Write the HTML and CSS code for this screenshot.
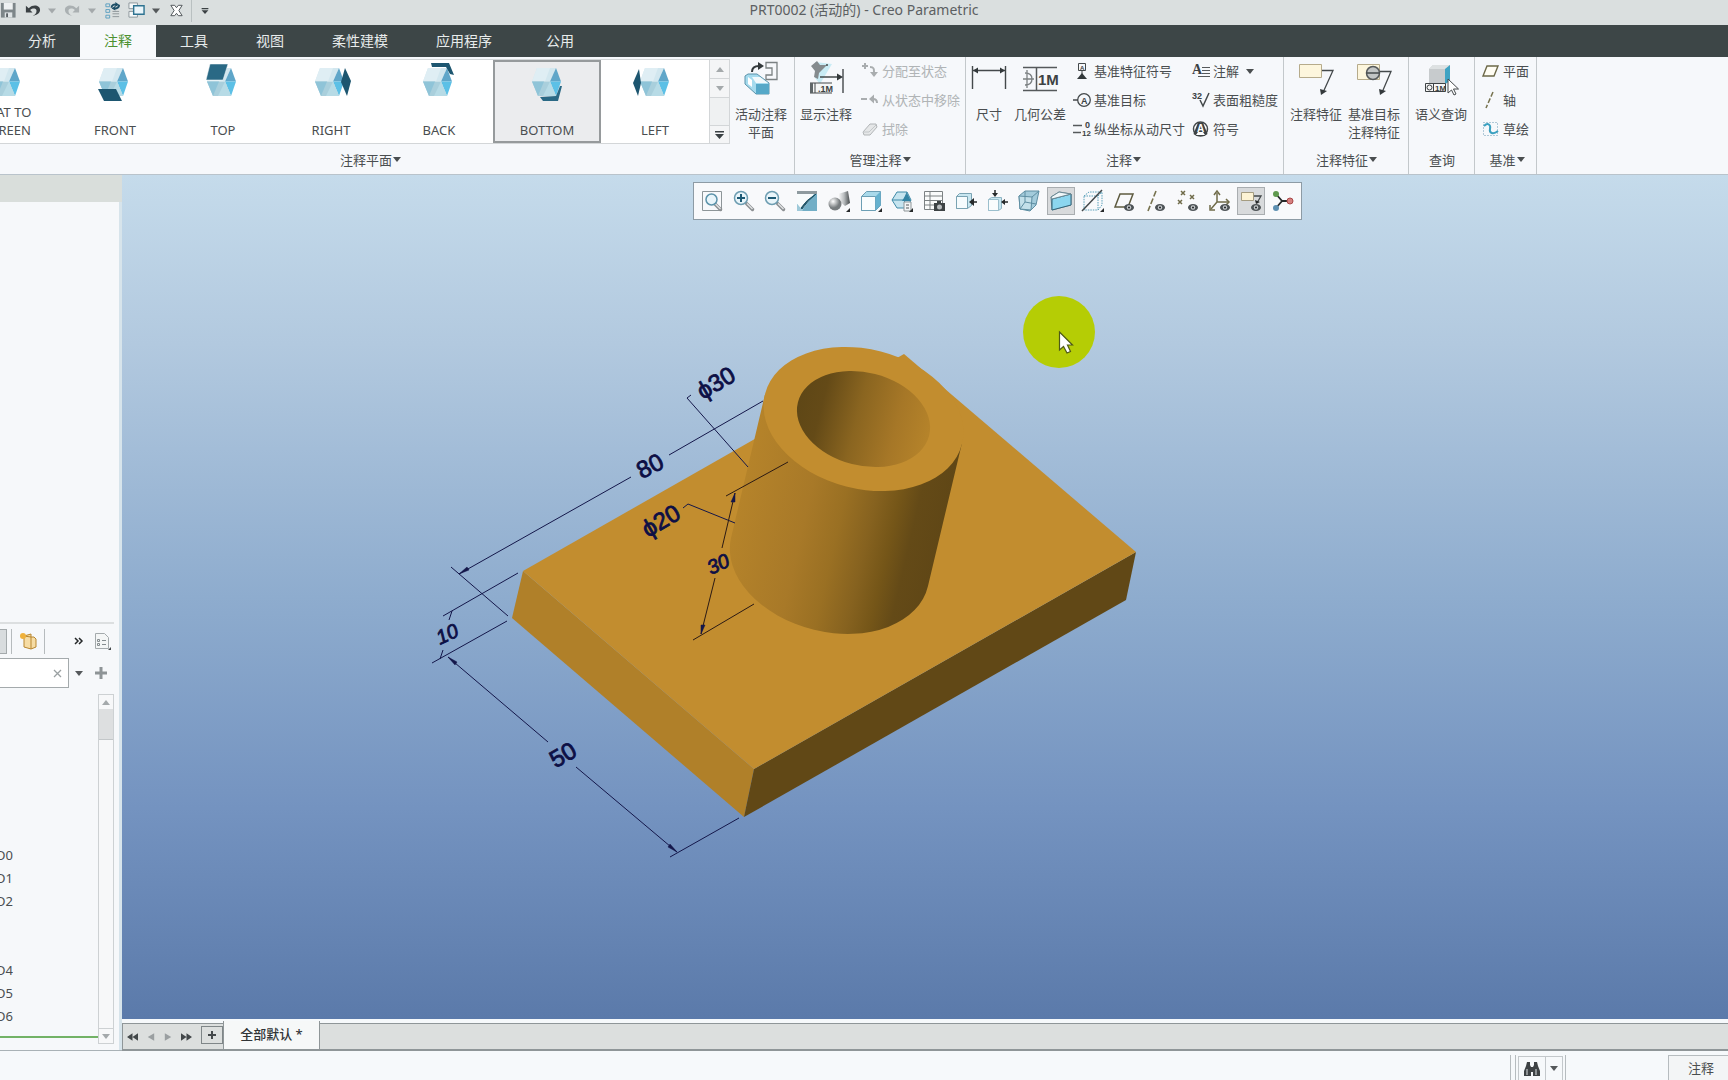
FILE: index.html
```html
<!DOCTYPE html>
<html lang="zh-CN">
<head>
<meta charset="utf-8">
<title>PRT0002 (活动的) - Creo Parametric</title>
<link rel="stylesheet" href="styles.css">
</head>
<body>
<svg class="defs" aria-hidden="true">
  <symbol id="caret" viewBox="0 0 8 5"><path d="M0 0h8L4 5z" fill="currentColor"/></symbol>
  <symbol id="cube" viewBox="0 0 30 28">
    <path d="M5 0h19l-6 13.500H0z" fill="#d2e7ef"/>
    <path d="M5 0h13l-5 13.500H0z" fill="#dfeef4"/>
    <path d="M24 0l5 13.500H18z" fill="#5fa6c9"/>
    <path d="M29 13.500L24 28l-6-14.500z" fill="#5cc0e6"/>
    <path d="M0 13.500h18L24 28H6z" fill="#a9cfdc"/>
    <path d="M0 13.500h12L6 28z" fill="#8fc4d8"/>
    <path d="M18 13.500L24 28H11z" fill="#b7dbe6"/>
  </symbol>
  <symbol id="eye" viewBox="0 0 10 7"><ellipse cx="5" cy="3.500" rx="5" ry="3.500" fill="#4d5356"/><circle cx="5" cy="3.500" r="2.200" fill="#c9cdd0"/><circle cx="5" cy="3.500" r="1.100" fill="#2c3032"/></symbol>
  <symbol id="lens" viewBox="0 0 22 22"><path d="M13.500 13.500l6 6" stroke="#8b8f92" stroke-width="3.400" stroke-linecap="round"/><path d="M14 13.500l5.500 5.500" stroke="#e4e6e7" stroke-width="1.200"/></symbol>
</svg>

<header class="titlebar">
  <nav class="quick" aria-label="快速访问">
    <button class="qbtn" aria-label="保存"><svg viewBox="0 0 18 18"><path d="M1 1h15.500v15.500H1z" fill="#7d8689"/><path d="M4 1h9.500v7H4z" fill="#eef1f2"/><path d="M5 11h8v5.500H5z" fill="#dfe4e6"/><path d="M6.500 12h2v4h-2z" fill="#596064"/></svg></button>
    <button class="qbtn" aria-label="撤消"><svg viewBox="0 0 18 18"><path d="M2 4v7h7L6.500 8.500C10 5.500 14.500 7 13 11c-.5 1.500-2 2.800-4 3.500 5-.3 8-2.800 8-6 0-5-7-6.500-12-2z" fill="#3b4144"/></svg></button>
    <button class="qdrop faint" aria-label="撤消列表"><svg><use href="#caret"/></svg></button>
    <button class="qbtn" aria-label="重做"><svg viewBox="0 0 18 18"><path d="M16 4v7H9l2.500-2.500C8 5.500 3.500 7 5 11c.5 1.500 2 2.800 4 3.500-5-.3-8-2.800-8-6C1 3.500 8 2 13 6.500z" fill="#aab0b2"/></svg></button>
    <button class="qdrop faint" aria-label="重做列表"><svg><use href="#caret"/></svg></button>
    <button class="qbtn" aria-label="重新生成"><svg viewBox="0 0 18 18" fill="none"><path d="M2 2h4v3H2zM2 8h4v3H2zM2 14h4v3H2z" stroke="#5b9fc0"/><path d="M9 10h7M9 12.500h7M9 15.500h7" stroke="#8d9598"/><path d="M8 6c0-3 3-4 5-3M16 3c0 3-2 4-5 4" stroke="#1d4e66" stroke-width="2"/><path d="M12 0l4 3-4 2zM12 4L8 7l4 2z" fill="#1d4e66"/></svg></button>
    <button class="qbtn" aria-label="窗口"><svg viewBox="0 0 18 18" fill="none"><path d="M1 1h9v6H1zM1 10h9v6H1z" fill="#f5f8f9" stroke="#8c979b"/><path d="M6 4h11v9H6z" fill="#eaf5fa" stroke="#2e7391" stroke-width="1.500"/></svg></button>
    <button class="qdrop" aria-label="窗口列表"><svg><use href="#caret"/></svg></button>
    <button class="qbtn" aria-label="关闭窗口"><svg viewBox="0 0 18 18"><path d="M3 3.500h4l2 2.500 2-2.500h4L11.500 9l3.500 5.500h-4L9 12l-2 2.500H3L6.500 9z" fill="#fff" stroke="#4b5255"/></svg></button>
    <span class="qsep"></span>
    <button class="qdrop" aria-label="自定义"><svg viewBox="0 0 9 8"><path d="M0 0h9v1.500H0zM0 3h9L4.500 8z" fill="#3b4144"/></svg></button>
  </nav>
  <h1 class="title">PRT0002 (活动的) - Creo Parametric</h1>
</header>

<nav class="tabs" aria-label="功能区">
  <button class="tab">分析</button>
  <button class="tab is-active">注释</button>
  <button class="tab">工具</button>
  <button class="tab">视图</button>
  <button class="tab">柔性建模</button>
  <button class="tab">应用程序</button>
  <button class="tab tab-last">公用</button>
</nav>

<section class="ribbon">
  <div class="group group-planes">
    <div class="group-body">
      <div class="gallery">
        <button class="cell"><svg viewBox="0 0 40 40"><use href="#cube" x="4" y="6" width="30" height="28"/></svg><span>FLAT TO<br>SCREEN</span></button>
        <button class="cell"><svg viewBox="0 0 40 40"><use href="#cube" x="4" y="6" width="30" height="28"/><path d="M3 27h18l6 12H9z" fill="#1d5670"/></svg><span>FRONT</span></button>
        <button class="cell"><svg viewBox="0 0 40 40"><use href="#cube" x="4" y="6" width="30" height="28"/><path d="M7 2h18l-5 16H3z" fill="#2a6985" stroke="#fff" stroke-width=".5"/></svg><span>TOP</span></button>
        <button class="cell"><svg viewBox="0 0 40 40"><use href="#cube" x="4" y="6" width="30" height="28"/><path d="M34 6l6 13-4 15-6-14z" fill="#1d5670"/></svg><span>RIGHT</span></button>
        <button class="cell"><svg viewBox="0 0 40 40"><use href="#cube" x="4" y="6" width="30" height="28"/><path d="M12 1h18l5 12-4-1-4-7H13z" fill="#1d5670"/></svg><span>BACK</span></button>
        <button class="cell is-selected"><svg viewBox="0 0 40 40"><use href="#cube" x="5" y="6" width="30" height="28"/><path d="M13 35l3 4h15l4-15h-2l-4 10z" fill="#2a6985"/></svg><span>BOTTOM</span></button>
        <button class="cell"><svg viewBox="0 0 40 40"><use href="#cube" x="5" y="6" width="30" height="28"/><path d="M4 7l-6 14 5 13 3-13z" fill="#1d5670"/></svg><span>LEFT</span></button>
        <div class="gallery-nav">
          <button class="faint" aria-label="上一行"><svg class="up"><use href="#caret"/></svg></button>
          <button class="faint" aria-label="下一行"><svg><use href="#caret"/></svg></button>
          <span></span>
          <button aria-label="更多"><svg viewBox="0 0 9 8"><path d="M0 0h9v1.500H0zM0 3h9L4.500 8z" fill="#3b4144"/></svg></button>
        </div>
      </div>
      <button class="big"><svg viewBox="0 0 36 36" fill="none"><path d="M23 2.500h11v17H23v-4.500h6v-7h-6z" stroke="#7b8183" stroke-width="1.300"/><path d="M9 12c0-5 3-6 7-6" stroke="#33393b" stroke-width="2"/><path d="M15 2l6 4-6 4z" fill="#33393b"/><path d="M2 16l3-2h9l12 9v11H13L2 24z" fill="#a5dbee" stroke="#5c93aa"/><path d="M5 17l4 3v7l-4-3z" fill="#fff"/><path d="M9 17h8l8 6H13z" fill="#f1f9fc"/><path d="M13 24h13v10H13z" fill="#55a8c8"/></svg><span>活动注释<br>平面</span></button>
    </div>
    <button class="group-label">注释平面<svg><use href="#caret"/></svg></button>
  </div>

  <div class="group group-manage">
    <div class="group-body">
      <button class="big"><svg viewBox="0 0 36 36" fill="none"><path d="M7 2l17 2L12 24l-5-6z" fill="#c9ecf5"/><path d="M3 6l6-5 3 4h7l-8 8-1 6-4-2 1-6z" fill="#858b8e"/><path d="M18 5h2M12 17h18M35 9v24" stroke="#44494b" stroke-width="1.400"/><path d="M35 17l-6-3.500v7z" fill="#33393b"/><path d="M2 23h22v10H2z" fill="#f4f6f6"/><path d="M2 23h22M2 33h22M7 23v10" stroke="#44494b"/><path d="M2 23h3v10H2z" fill="#5f6668"/><text x="10" y="32" class="glyph g9">.1M</text></svg><span>显示注释</span></button>
      <div class="stack">
        <button class="small" disabled><svg viewBox="0 0 18 18"><path d="M1 4h6M4 1v6" stroke="#a9adaf" stroke-width="2"/><path d="M9 5c4 0 4 2 4 5" fill="none" stroke="#a9adaf" stroke-width="2"/><path d="M9 10h8l-4 5z" fill="#a9adaf"/></svg>分配至状态</button>
        <button class="small" disabled><svg viewBox="0 0 18 18"><path d="M0 8h6" stroke="#a9adaf" stroke-width="2"/><path d="M12 8c3 0 4 1 4 4" fill="none" stroke="#a9adaf" stroke-width="2"/><path d="M13 3.500v9L8 8z" fill="#a9adaf"/></svg>从状态中移除</button>
        <button class="small" disabled><svg viewBox="0 0 18 18"><path d="M2 12l7-8h6l1 3-7 8H3z" fill="#e5e7e8" stroke="#b1b5b7"/><path d="M2 12h6l8-8" fill="none" stroke="#c3c7c9"/></svg>拭除</button>
      </div>
    </div>
    <button class="group-label">管理注释<svg><use href="#caret"/></svg></button>
  </div>

  <div class="group group-notes">
    <div class="group-body">
      <button class="big big-narrow"><svg viewBox="0 0 36 36" fill="none"><path d="M1.500 6v23M34.500 6v23M2 10.500h32" stroke="#44494b" stroke-width="1.400"/><path d="M2 10.500l5-3v6zM34 10.500l-5-3v6z" fill="#33393b"/></svg><span>尺寸</span></button>
      <button class="big big-mid"><svg viewBox="0 0 36 36" fill="none"><path d="M1 7.500h34M1 30.500h34M14.500 8v22" stroke="#55595b" stroke-width="1.500"/><path d="M3 13c5 0 7 3 7 6s-2 6-7 6M1 19h11M5 10v18" stroke="#7c8183" stroke-width="1.300"/><text x="16" y="25" class="glyph g15">1M</text></svg><span>几何公差</span></button>
      <div class="stack">
        <button class="small"><svg viewBox="0 0 18 18" fill="none"><path d="M5.500 1.500h7v7h-7zM9 9v5" stroke="#44494b"/><text x="7" y="8" class="glyph g6">A</text><path d="M9 11l5 6H4z" fill="#33393b"/></svg>基准特征符号</button>
        <button class="small"><svg viewBox="0 0 18 18" fill="none"><circle cx="11" cy="9" r="6.300" stroke="#44494b" stroke-width="1.300"/><path d="M0 9h5" stroke="#44494b" stroke-width="1.500"/><text x="8" y="13" class="glyph g9">A</text></svg>基准目标</button>
        <button class="small"><svg viewBox="0 0 18 18" fill="none"><path d="M0 5.500h9M0 12.500h8" stroke="#55595b" stroke-width="1.300"/><text x="12" y="8" class="glyph g9">0</text><text x="9" y="16" class="glyph g8">12</text></svg>纵坐标从动尺寸</button>
      </div>
      <div class="stack">
        <button class="small"><svg viewBox="0 0 18 18" fill="none"><text x="0" y="12" class="glyph serif">A</text><path d="M10 5.500h8M10 8.500h8M10 11.500h8M6 14.500h12" stroke="#55595b"/></svg>注解<svg class="caret"><use href="#caret"/></svg></button>
        <button class="small"><svg viewBox="0 0 18 18" fill="none"><text x="0" y="8" class="glyph g9">32</text><path d="M8 9l3 6 6-13" stroke="#44494b" stroke-width="1.500"/></svg>表面粗糙度</button>
        <button class="small"><svg viewBox="0 0 18 18" fill="none"><circle cx="8.500" cy="9" r="7" fill="#fff" stroke="#44494b" stroke-width="1.500"/><path d="M6 2.500h5l4.500 11.500-3 2h-8l-3-2z" fill="#3d4244"/><path d="M4 15l2-3h5l2 3z" fill="#fff"/><text x="5" y="12" class="glyph g10 knock">A</text></svg>符号</button>
      </div>
    </div>
    <button class="group-label">注释<svg><use href="#caret"/></svg></button>
  </div>

  <div class="group group-features">
    <div class="group-body">
      <button class="big"><svg viewBox="0 0 36 36" fill="none"><path d="M1.500 4.500h22v13h-22z" fill="#fdf6dd" stroke="#b6ab8b"/><path d="M24 10.500h11l-10 22" stroke="#44494b" stroke-width="1.300"/><path d="M23 35l-1-6 7 2z" fill="#33393b"/></svg><span>注释特征</span></button>
      <button class="big"><svg viewBox="0 0 36 36" fill="none"><path d="M1.500 4.500h22v15h-22z" fill="#fdf6dd" stroke="#b6ab8b"/><circle cx="17" cy="13" r="6.500" fill="#c2c5c5" stroke="#55595b" stroke-width="1.500"/><path d="M10.500 13h13M24 11.500h11l-9 21" stroke="#44494b" stroke-width="1.300"/><path d="M24 35l-1-6 7 2z" fill="#33393b"/></svg><span>基准目标<br>注释特征</span></button>
    </div>
    <button class="group-label">注释特征<svg><use href="#caret"/></svg></button>
  </div>

  <div class="group group-query">
    <div class="group-body">
      <button class="big"><svg viewBox="0 0 36 36" fill="none"><path d="M6 9l4-4h17v15l-4 4H6z" fill="#c7cbcd"/><path d="M6 9l4-4h17l-4 4z" fill="#dde1e2"/><path d="M22 9l5-4v16l-5 3z" fill="#3fa3c3"/><path d="M2.500 23.500h20v8h-20zM10.500 24v7" fill="#f6f6f6" stroke="#3d4244"/><circle cx="6.500" cy="27.500" r="2.500" stroke="#3d4244"/><text x="12" y="31" class="glyph g8">1M</text><path d="M25 19v14l3.500-3 2.500 5 2-1-2.500-5h5z" fill="#fff" stroke="#44494b"/></svg><span>语义查询</span></button>
    </div>
    <span class="group-label">查询</span>
  </div>

  <div class="group group-datum">
    <div class="group-body">
      <div class="stack">
        <button class="small"><svg viewBox="0 0 18 18"><path d="M5 4h11l-4 10H1z" fill="#fffdf3" stroke="#6c6848" stroke-width="1.400"/></svg>平面</button>
        <button class="small"><svg viewBox="0 0 18 18"><path d="M11 1L4 17" stroke="#77734f" stroke-width="1.500" stroke-dasharray="5 2"/></svg>轴</button>
        <button class="small"><svg viewBox="0 0 18 18" fill="none"><path d="M1.500 2.500h14v13h-14z" stroke="#6b9ab5" stroke-dasharray="1 2"/><path d="M2 6c4-4 7-1 6 3s3 6 8 2" stroke="#3aa0c0" stroke-width="2"/></svg>草绘</button>
      </div>
    </div>
    <button class="group-label">基准<svg><use href="#caret"/></svg></button>
  </div>
</section>

<main class="work">
  <aside class="side">
    <div class="side-head"></div>
    <div class="side-upper"></div>
    <div class="side-lower">
      <div class="side-tools">
        <button class="stool is-on" aria-label="设置"></button>
        <span class="ssep"></span>
        <button class="stool" aria-label="新建文件夹"><svg viewBox="0 0 18 18"><path d="M5 4l7-2v3h3l2 2v8l-5 2-7-2z" fill="#f6dca4" stroke="#b8862f"/><path d="M12 5v12M5 4l7 1" stroke="#b8862f" fill="none"/><circle cx="4" cy="4" r="3" fill="#efb13c"/></svg></button>
        <span class="ssep"></span>
        <button class="stool more" aria-label="更多工具"><svg viewBox="0 0 9 8"><path d="M1 1l3 3-3 3M5 1l3 3-3 3" fill="none" stroke="#26292a" stroke-width="1.500"/></svg></button>
        <button class="stool" aria-label="显示选项"><svg viewBox="0 0 18 18"><path d="M2.500 1.500h9l4 4v11h-13z" fill="#f4f6f6" stroke="#a4aaac"/><path d="M4.500 7.500h2v2h-2zM4.500 11.500h2v2h-2zM9 8.500h4M9 12.500h4" fill="none" stroke="#858c8f"/><path d="M18 15v3h-3z" fill="#44494b"/></svg></button>
      </div>
      <div class="search">
        <label class="search-box"><input type="text" aria-label="搜索"><svg viewBox="0 0 9 9"><path d="M1 1l7 7M8 1L1 8" stroke="#9aa0a2" stroke-width="1.300"/></svg></label>
        <button class="sbtn" aria-label="搜索选项"><svg class="caret"><use href="#caret"/></svg></button>
        <button class="sbtn" aria-label="添加"><svg class="plus" viewBox="0 0 12 12"><path d="M6 0v12M0 6h12" stroke="#8e9496" stroke-width="3"/></svg></button>
      </div>
      <div class="tree-wrap">
        <div class="tree-col">
          <ul class="tree"><li>D0</li><li>D1</li><li>D2</li><li></li><li></li><li>D4</li><li>D5</li><li>D6</li></ul>
          <div class="insert-line"></div>
        </div>
        <div class="scroll">
          <button class="faint" aria-label="向上"><svg class="up"><use href="#caret"/></svg></button>
          <span class="thumb"></span>
          <span class="track"></span>
          <button class="faint" aria-label="向下"><svg><use href="#caret"/></svg></button>
        </div>
      </div>
    </div>
  </aside>

  <section class="stage">
    <div class="viewport">
      <svg class="scene" viewBox="122 175 1606 844" role="img" aria-label="PRT0002 模型">
        <defs>
          <linearGradient id="wall" gradientUnits="userSpaceOnUse" x1="748" y1="466" x2="946" y2="512">
            <stop offset="0" stop-color="#b5832a"/><stop offset=".33" stop-color="#a87928"/><stop offset=".5" stop-color="#9a7023"/><stop offset=".65" stop-color="#86621f"/><stop offset=".76" stop-color="#755618"/><stop offset=".86" stop-color="#644a17"/><stop offset="1" stop-color="#604716"/>
          </linearGradient>
          <linearGradient id="bore" gradientUnits="userSpaceOnUse" x1="797" y1="419" x2="930" y2="419">
            <stop offset="0" stop-color="#5f4716"/><stop offset=".17" stop-color="#644a17"/><stop offset=".45" stop-color="#8a6520"/><stop offset=".75" stop-color="#a67727"/><stop offset="1" stop-color="#b5832a"/>
          </linearGradient>
        </defs>
        <path d="M523 571L754 769 744 817 512 618z" fill="#b08029"/>
        <path d="M754 769L1136 552 1126 600 744 817z" fill="#614816"/>
        <path d="M523 571L904 354 1136 552 754 769z" fill="#c28d2f"/>
        <path d="M764.800 395L731 538A100 68.600 14.400 0 0 928 586L962 443z" fill="url(#wall)"/>
        <ellipse cx="863.500" cy="419" rx="101.600" ry="69.700" transform="rotate(14.400 863.500 419)" fill="#c28d2f"/>
        <ellipse cx="863.500" cy="419" rx="67.700" ry="46.500" transform="rotate(14.400 863.500 419)" fill="url(#bore)"/>
        <path class="dim" d="M763 401L669 455M631 477L459 574M451 567l57 49M518 573l-75 43M507 621l-75 42M452 611l-3 9M443 650l-3 9M448 657l100 85M576 767l101 85M739 818l-69 39M748 467l-61-69 4-3M683 508l5-4 47 19"/>
        <path class="dim on-part" d="M735 493l-13 55M715 578l-14 56M726 496l62-34M693 640l61-36"/>
        <path class="tip" d="M459 574l8-7 2 3zM448 657l9 5-2 3zM677 852l-9-5 2-3zM735 493l-4 9h4zM701 634v-9h4z"/>
        <g class="dim-text">
          <text transform="translate(650 466) rotate(-27)" y="8">80</text>
          <text transform="translate(716 383) rotate(-30)" y="8">ϕ30</text>
          <text transform="translate(661 521) rotate(-30)" y="8">ϕ20</text>
          <text transform="translate(563 755) rotate(-30)" y="8">50</text>
          <text class="slant" transform="translate(718 564) rotate(-25)" y="7">30</text>
          <text class="slant" transform="translate(447 634) rotate(-25)" y="7">10</text>
        </g>
        <circle cx="1059" cy="332" r="36" fill="#b5cd05"/>
        <path d="M1059.500 332v18l4-3.500 3.500 6.500 3.500-1.500-3-6.500h5z" fill="#fff" stroke="#4e5a16" stroke-width="1.200"/>
      </svg>
      <div class="viewbar" role="toolbar" aria-label="视图">
        <button aria-label="重新调整"><svg viewBox="0 0 22 22" fill="none"><path d="M1.500 1.500h19v19h-19z" stroke="#8d9598"/><use href="#lens" width="22" height="22"/><circle cx="10.500" cy="9.500" r="5.500" fill="#e9f5fa" stroke="#5c93aa" stroke-width="1.500"/></svg></button>
        <button aria-label="放大"><svg viewBox="0 0 22 22" fill="none"><use href="#lens" width="22" height="22"/><circle cx="8" cy="8" r="6.500" fill="#e9f5fa" stroke="#6d9db1" stroke-width="1.500"/><path d="M4 8h8M8 4v8" stroke="#1d5a75" stroke-width="2"/></svg></button>
        <button aria-label="缩小"><svg viewBox="0 0 22 22" fill="none"><use href="#lens" width="22" height="22"/><circle cx="8" cy="8" r="6.500" fill="#e9f5fa" stroke="#6d9db1" stroke-width="1.500"/><path d="M4 8h8" stroke="#1d5a75" stroke-width="2"/></svg></button>
        <button aria-label="重画"><svg viewBox="0 0 22 22"><path d="M1 1h20v20H1z" fill="#72aec6"/><path d="M1 4h17L6 20 1 14z" fill="#f7fbfc"/><path d="M20 4Q12 10 6 19l-1-1Q10 10 20 4z" fill="#1f5468" stroke="#1f5468"/><path d="M1 1h20v3H1z" fill="#8e9a9f"/><path d="M1 14l6 7H1z" fill="#9ec9d9"/></svg></button>
        <button aria-label="渲染选项"><svg viewBox="0 0 22 22"><defs><radialGradient id="ball" cx=".35" cy=".3"><stop offset="0" stop-color="#fff"/><stop offset="1" stop-color="#777c7e"/></radialGradient><linearGradient id="cone"><stop offset="0" stop-color="#fff"/><stop offset=".5" stop-color="#b9bdbf"/><stop offset="1" stop-color="#44494b"/></linearGradient></defs><path d="M10 4l10-3 2 12-5 3q-5-3-7-12z" fill="url(#cone)"/><circle cx="7" cy="14" r="6.500" fill="url(#ball)"/><path d="M22 18v4h-4z" fill="#26292a"/></svg></button>
        <button aria-label="显示样式"><svg viewBox="0 0 22 22"><path d="M1.500 6.500l5-5h14v14l-5 5h-14z" fill="#a9d9ea" stroke="#6c9fb5"/><path d="M1.500 6.500h14v14h-14z" fill="#fafdfe" stroke="#6c9fb5"/><path d="M15.500 6.500l5-5v14l-5 5z" fill="#66b2cf"/><path d="M22 18v4h-4z" fill="#26292a"/></svg></button>
        <button aria-label="已保存方向"><svg viewBox="0 0 22 22"><path d="M1 10l5-8h10l4 8-4 8H6z" fill="#c6e4ef" stroke="#3f8aa8"/><path d="M1 10h12l3-8M13 10l3 8" fill="none" stroke="#3f8aa8"/><path d="M11 11l5-8 4 8z" fill="#3484a4"/><path d="M13 12h7v9h-7z" fill="#f3f5f6" stroke="#8d9598"/><path d="M15 15h3M15 18h3" stroke="#55595b"/><path d="M22 18v4h-4z" fill="#26292a"/></svg></button>
        <button aria-label="视图管理器"><svg viewBox="0 0 22 22"><path d="M1.500 1.500h18v18h-18zM1.500 6h18M1.500 10.500h18M1.500 15h18M7 1.500v18" fill="#fafbfb" stroke="#7c8183"/><path d="M11 13h11v8H11zM14 11h4v3h-4z" fill="#3d4244"/><circle cx="16.500" cy="17" r="2.500" fill="#b9bdbf"/></svg></button>
        <button aria-label="透视图"><svg viewBox="0 0 22 22"><path d="M1.500 6.500l3-3h12v12l-4 3h-11z" fill="#c8e6f0" stroke="#7aa3b3"/><path d="M1.500 6.500h11v12h-11z" fill="#f6fbfd" stroke="#7aa3b3"/><path d="M17 12h5" stroke="#26292a" stroke-width="1.500"/><path d="M19 8v8l-5-4z" fill="#26292a"/></svg></button>
        <button aria-label="外观"><svg viewBox="0 0 22 22"><path d="M2.500 9.500l3-2h10v11l-3 2h-10z" fill="#c8e6f0" stroke="#8fb5c4"/><path d="M2.500 9.500h10v11h-10z" fill="#f9fcfd" stroke="#9bbfcd"/><path d="M9 0v5M17 12h5" stroke="#26292a" stroke-width="1.500"/><path d="M6 3h6L9 7zM19 9v6l-4-3z" fill="#26292a"/></svg></button>
        <button aria-label="截面"><svg viewBox="0 0 22 22"><path d="M1 6l6-5h14l-3 14-6 6-10-2z" fill="#a3cbdb" stroke="#5e8ea2"/><path d="M1 6l13 1-1 13-11-1zM14 7l7-6" fill="#c3e0ea" stroke="#5e8ea2"/><path d="M7 1v11l-5 7M7 12l11 2" fill="none" stroke="#5e8ea2"/></svg></button>
        <button class="is-on" aria-label="剖面"><svg viewBox="0 0 22 22"><path d="M1 7l8-5 12 2v11L2 20z" fill="#cfeaf3" stroke="#6a8793"/><path d="M2 9l19-5v11L2 20z" fill="#8bd6ef" stroke="#33657a"/><path d="M1 7l8-5 12 2L2 9z" fill="#eff6f8" stroke="#6a8793"/></svg></button>
        <button aria-label="基准显示过滤器"><svg viewBox="0 0 22 22" fill="none"><path d="M2 6l5-4h13v13l-4 5H2zM2 6h14v14M16 6l4-4" stroke="#5aa0ba" stroke-dasharray="1.500 1"/><path d="M20 0L0 21" stroke="#44494b" stroke-width="1.500"/><path d="M22 18v4h-4z" fill="#26292a"/></svg></button>
        <button aria-label="平面显示"><svg viewBox="0 0 22 22"><path d="M7 4h13l-5 13H2z" fill="none" stroke="#5e5b40" stroke-width="1.500"/><use href="#eye" x="11" y="14" width="10" height="7"/></svg></button>
        <button aria-label="轴显示"><svg viewBox="0 0 22 22"><path d="M11 1L3 21" stroke="#77734f" stroke-width="1.600" stroke-dasharray="6 2"/><use href="#eye" x="10" y="14" width="10" height="7"/></svg></button>
        <button aria-label="点显示"><svg viewBox="0 0 22 22"><path d="M4 1l4 4M8 1L4 5M13 5l4 4M17 5l-4 4M1 10l4 4M5 10l-4 4" stroke="#6f6b49" stroke-width="1.500"/><use href="#eye" x="11" y="14" width="10" height="7"/></svg></button>
        <button aria-label="坐标系显示"><svg viewBox="0 0 22 22" fill="none"><path d="M8 3v9l-6 7M8 12h11" stroke="#6f6b49" stroke-width="1.500"/><path d="M5 5l3-4 3 4M17 9l3 3-3 3M1 15v5h5" stroke="#6f6b49" stroke-width="1.500"/><use href="#eye" x="11" y="14" width="10" height="7"/></svg></button>
        <button class="is-on" aria-label="注释显示"><svg viewBox="0 0 22 22"><path d="M1.500 2.500h12v8h-12z" fill="#fdf3d4" stroke="#a59c80"/><path d="M14 6h7l-4 7" fill="none" stroke="#44494b" stroke-width="1.300"/><path d="M15 10l5 2-4 2z" fill="#26292a"/><use href="#eye" x="11" y="14" width="10" height="7"/></svg></button>
        <button aria-label="旋转中心"><svg viewBox="0 0 22 22"><path d="M4 4l6 7-6 7M10 11h9" fill="none" stroke="#26292a" stroke-width="1.800"/><circle cx="4" cy="4" r="3" fill="#5f9a4f"/><circle cx="18" cy="11" r="3" fill="#d58080" stroke="#a94848"/><circle cx="4" cy="18" r="3" fill="#5c8fb1"/></svg></button>
      </div>
    </div>
    <div class="sheets">
      <button class="sheet-nav" aria-label="第一个"><svg viewBox="0 0 12 8"><path d="M6 0v8L0 4zM12 0v8L6 4z" fill="#43484a"/></svg></button>
      <button class="sheet-nav" aria-label="上一个"><svg viewBox="0 0 12 8"><path d="M10 0v8L3 4z" fill="#9a9fa1"/></svg></button>
      <button class="sheet-nav" aria-label="下一个"><svg viewBox="0 0 12 8"><path d="M2 0v8l7-4z" fill="#9a9fa1"/></svg></button>
      <button class="sheet-nav" aria-label="最后一个"><svg viewBox="0 0 12 8"><path d="M0 0v8l6-4zM6 0v8l6-4z" fill="#43484a"/></svg></button>
      <button class="sheet-add" aria-label="新建"><svg viewBox="0 0 8 8"><path d="M4 0v8M0 4h8" stroke="#43484a" stroke-width="2"/></svg></button>
      <button class="sheet">全部默认 *</button>
    </div>
  </section>
</main>

<footer class="status">
  <span class="grip"></span>
  <div class="find">
    <button aria-label="查找"><svg viewBox="0 0 18 16"><path d="M4 1h3v3l1 2v9H1v-5l2-5zM14 1h-3v3l-1 2v9h7v-5l-2-5z" fill="#3d4244"/><path d="M8 6h2v5H8z" fill="#3d4244"/><path d="M3 8h2v6H3zM12 8h2v6h-2z" fill="#8c9193"/></svg></button>
    <button class="find-drop" aria-label="查找选项"><svg class="caret"><use href="#caret"/></svg></button>
  </div>
  <button class="filter">注释</button>
</footer>
</body>
</html>
```
FILE: styles.css
```css
* { box-sizing: border-box; }

body {
  margin: 0;
  height: 100vh;
  display: flex;
  flex-direction: column;
  overflow: hidden;
  background: #f6f9fb;
  color: #4a4e50;
  font: 13px/18px "Noto Sans", "Noto Sans CJK SC", sans-serif;
}

button {
  margin: 0;
  padding: 0;
  border: 0;
  background: none;
  color: inherit;
  font: inherit;
  white-space: nowrap;
}

svg { display: block; flex: none; overflow: visible; }
.defs { position: absolute; width: 0; height: 0; }
.faint { color: #a4a9ab; }
.up { transform: rotate(180deg); }

/* title bar */
.titlebar {
  flex: none;
  height: 25px;
  display: grid;
  grid-template-columns: 1fr auto 1fr;
  align-items: center;
  background: #dadfdf;
}
.quick { display: flex; align-items: center; margin: -4px 0 0 -4px; }
.qbtn { width: 24px; height: 20px; display: grid; place-items: center; }
.qbtn svg { width: 17px; height: 17px; }
.qdrop { width: 16px; height: 20px; display: grid; place-items: center; color: #55595b; }
.qdrop.faint { color: #a4a9ab; }
.qdrop svg { width: 8px; height: 6px; }
.qsep { width: 1px; height: 22px; margin: 0 5px 0 3px; background: #b9c0c1; }
.title { margin: 0; padding-bottom: 5px; font-size: 14px; font-weight: 400; color: #5c6062; }

/* ribbon tabs */
.tabs { flex: none; height: 32px; display: flex; padding-left: 4px; background: #3d4647; }
.tab { padding: 0 24px; font-size: 14px; color: #e8ecec; }
.tab.is-active { background: #f7f9fb; color: #4c9130; }
.tab-last { padding: 0 30px; }

/* ribbon */
.ribbon {
  flex: none;
  height: 118px;
  display: flex;
  background: #f6f8fb;
  border-bottom: 1px solid #b9c3cb;
}
.group { display: flex; flex-direction: column; border-right: 1px solid #c3c8cb; }
.group-body { height: 88px; display: flex; }
.group-label {
  height: 29px;
  display: flex;
  align-items: center;
  justify-content: center;
  gap: 1px;
  padding-right: 2px;
}
.group-label svg, .caret, .gallery-nav svg, .scroll svg { width: 8px; height: 5px; }
.group-planes { width: 848px; margin-left: -53px; padding-left: 6px; }
.group-planes .group-label { padding-right: 6px; }
.group-manage { width: 171px; padding-left: 2px; }
.group-notes { width: 318px; }
.group-features { width: 125px; padding-left: 3px; }
.group-query { width: 66px; padding-left: 3px; }
.group-datum { width: 62px; padding-left: 5px; }

.gallery {
  height: 85px;
  margin: 2px 0 0;
  display: flex;
  background: #fff;
  border: 1px solid #d3d6d8;
  border-left: 0;
}
.cell {
  width: 108px;
  display: flex;
  flex-direction: column;
  align-items: center;
  justify-content: space-between;
  padding: 1px 0 3px;
  border: 1px solid transparent;
}
.cell svg { width: 40px; height: 40px; margin-bottom: -8px; }
.cell.is-selected { background: #ebecee; outline: 2px solid #969a9c; outline-offset: -2px; }
.gallery-nav { width: 20px; display: flex; flex-direction: column; background: #eff1f2; border-left: 1px solid #d3d6d8; }
.gallery-nav button { height: 19px; display: grid; place-items: center; background: #f4f5f6; border-bottom: 1px solid #d3d6d8; }
.gallery-nav button:last-child { height: 17px; border: 0; }
.gallery-nav button:last-child svg { width: 9px; height: 8px; }
.gallery-nav span { flex: 1; border-bottom: 1px solid #d3d6d8; }

.big {
  width: 58px;
  display: flex;
  flex-direction: column;
  align-items: center;
  gap: 9px;
  padding-top: 3px;
}
.big svg { width: 36px; height: 36px; }
.big-narrow { width: 46px; }
.big-mid { width: 56px; }
.group-planes .big { margin-left: 2px; }
.group-notes .stack { margin-left: 3px; }
.group-manage .stack { margin-left: 4px; }
.stack { display: flex; flex-direction: column; }
.small { height: 29px; display: flex; align-items: center; gap: 3px; padding: 0 2px 1px; color: #4a4e50; }
.small:disabled { color: #b0b4b6; }
.small svg { width: 18px; height: 18px; }
.small .caret { width: 8px; height: 5px; margin-left: 4px; }

.glyph { fill: #3d4244; font-family: "Liberation Sans", sans-serif; font-weight: 700; }
.g6 { font-size: 6px; }
.g8 { font-size: 8px; }
.g9 { font-size: 9px; }
.g10 { font-size: 10px; }
.g15 { font-size: 15px; }
.serif { font-family: "Liberation Serif", serif; font-size: 14px; }
.knock { fill: #fff; }

/* work area */
.work { flex: 1; min-height: 0; display: grid; grid-template-columns: 122px 1fr; }
.side { display: grid; grid-template-rows: 27px 420fr 428fr; min-height: 0; border-bottom: 1px solid #a9b2b6; }
.side-head { background: #d9dedb; }
.side-upper, .side-lower { border-right: 3px solid #d7e4eb; background: #f6f8fa; }
.side-lower { display: flex; flex-direction: column; padding: 0 5px 6px 0; min-height: 0; }
.side-tools { height: 36px; display: flex; align-items: center; border-top: 2px solid #dcdfe0; }
.stool { width: 24px; height: 25px; display: grid; place-items: center; }
.stool svg { width: 18px; height: 18px; }
.stool.more { margin-left: auto; }
.stool.more svg { width: 9px; height: 8px; }
.stool.is-on { width: 7px; background: #d8dcde; border: 1px solid #a4aaac; border-left: 0; }
.ssep { width: 1px; height: 25px; margin: 0 4px; background: #b6bbbd; }
.search { height: 30px; display: flex; align-items: center; }
.search-box { width: 69px; height: 30px; display: flex; align-items: center; padding-right: 6px; background: #fff; border: 1px solid #a4aaac; border-left: 0; }
.search-box input { flex: 1; min-width: 0; padding: 0; border: 0; background: none; font: inherit; outline: 0; }
.search-box svg { width: 9px; height: 9px; }
.sbtn { width: 20px; height: 24px; display: grid; place-items: center; color: #55595b; }
.sbtn + .sbtn { width: 24px; }
.plus { width: 12px; height: 12px; }
.tree-wrap { flex: 1; min-height: 0; display: flex; margin-top: 6px; }
.tree-col { flex: 1; display: flex; flex-direction: column; justify-content: flex-end; padding-bottom: 6px; }
.tree { width: 13px; margin: 0 0 9px; padding: 0; list-style: none; overflow: hidden; }
.tree li { height: 23px; display: flex; align-items: center; justify-content: flex-end; }
.insert-line { height: 2px; background: #72b266; }
.scroll { width: 16px; display: flex; flex-direction: column; border: 1px solid #cdd1d3; background: #f7f8f9; }
.scroll button { height: 14px; display: grid; place-items: center; }
.thumb { height: 31px; background: #dddfe0; border-bottom: 1px solid #c3c7c9; }
.track { flex: 1; border-bottom: 1px solid #cdd1d3; }

.stage { display: flex; flex-direction: column; min-width: 0; min-height: 0; }
.viewport {
  flex: 1;
  min-height: 0;
  position: relative;
  background: linear-gradient(#c5dbeb, #b2c9df 20%, #8eacce 50%, #7493c0 75%, #5b7aaa);
}
.scene { width: 100%; height: 100%; }
.dim { fill: none; stroke: #14174a; stroke-width: 1; }
.on-part { stroke: #2b1a14; }
.tip { fill: #14174a; stroke: #14174a; stroke-width: .5; }
.dim-text { fill: #0d0f45; stroke: #0d0f45; stroke-width: .8; font: 24px "Liberation Sans", sans-serif; text-anchor: middle; }
.slant { font-size: 20px; font-style: italic; }

.viewbar {
  position: absolute;
  top: 7px;
  left: 571px;
  width: 609px;
  height: 38px;
  display: flex;
  align-items: center;
  justify-content: space-between;
  padding: 0 4px;
  background: #f8f9fb;
  border: 1px solid #8d9ba5;
}
.viewbar button { width: 28px; height: 28px; display: grid; place-items: center; border: 1px solid transparent; }
.viewbar svg { width: 22px; height: 22px; }
.viewbar .is-on { background: #d8dadc; border-color: #a9adb0; }

.sheets {
  flex: none;
  height: 28px;
  margin-top: 4px;
  display: flex;
  background: #dcdfde;
  border: 1px solid #8f9698;
  border-width: 1px 0 2px 1px;
}
.sheet-nav { width: 18px; display: grid; place-items: center; }
.sheet-nav svg { width: 11px; height: 8px; }
.sheet-add { width: 22px; height: 18px; margin: 2px 0 0 6px; display: grid; place-items: center; border: 1px solid #7f8688; }
.sheet-add svg { width: 8px; height: 8px; }
.sheet { width: 97px; margin-top: -3px; padding-bottom: 3px; background: #f6f8f8; border: 1px solid #8f9698; border-width: 0 1px; font-weight: 500; color: #303436; }

/* status bar */
.status { flex: none; height: 29px; display: flex; justify-content: flex-end; background: #f6f9fb; padding-top: 4px; }
.grip { width: 6px; border: 1px solid #b6bcbf; border-width: 0 1px; }
.find { width: 48px; display: flex; margin-left: 2px; padding-top: 1px; border-right: 1px solid #b6bcbf; }
.find button { width: 28px; display: grid; place-items: center; border: 1px solid #c3c8cb; border-bottom: 0; }
.find button svg { width: 18px; height: 16px; }
.find .find-drop { width: 17px; border-left: 0; color: #55595b; }
.find .find-drop svg { width: 8px; height: 5px; }
.filter { width: 60px; margin-left: 102px; padding-left: 5px; background: #f3f5f6; border: 1px solid #b6bcbf; border-width: 1px 0 0 1px; }
```
